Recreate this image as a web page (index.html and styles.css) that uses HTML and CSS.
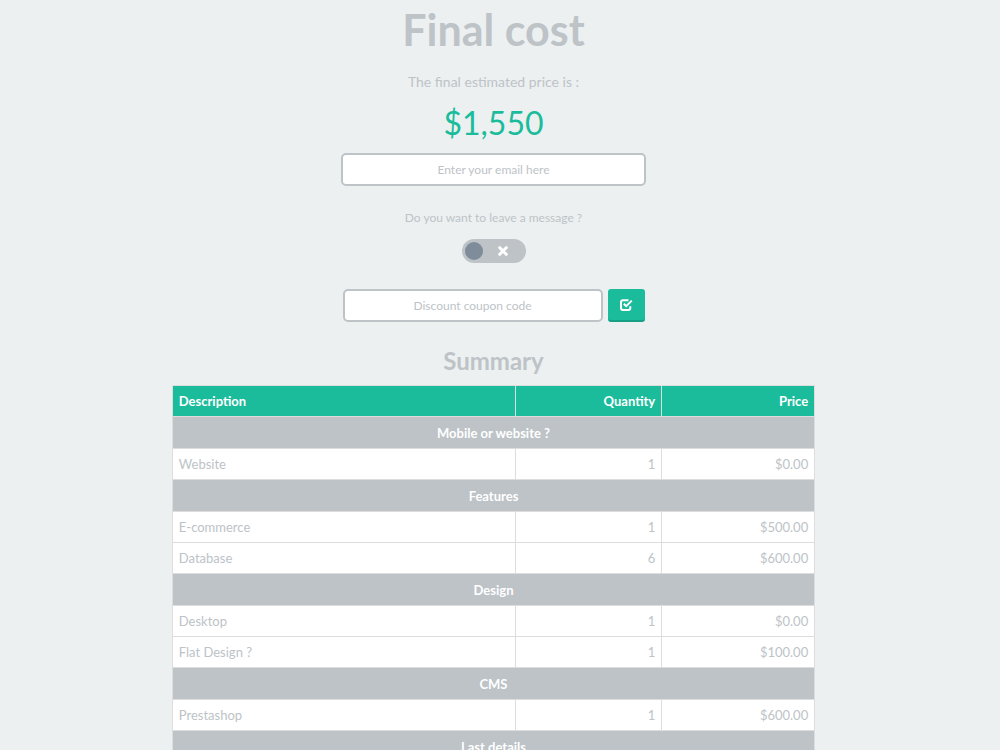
FILE: index.html
```html
<!DOCTYPE html>
<html lang="en">

<head>
  <meta charset="UTF-8" />
  <meta name="viewport" content="width=device-width, initial-scale=1.0" />
  <title>Final cost</title>
  <link rel="stylesheet" href="styles.css">
</head>

<body>

  <main class="estimate">
    <h1>Final cost</h1>
    <p class="lead">The final estimated price is :</p>
    <p class="total">$1,550</p>

    <form class="estimate-form">
      <input class="field email" type="email" placeholder="Enter your email here" aria-label="Email" />

      <label class="question" for="message">Do you want to leave a message ?</label>
      <div class="switch">
        <input id="message" type="checkbox" />
        <svg class="cross" viewBox="0 0 12 12" aria-hidden="true">
          <path d="M1.8 1.8 L10.2 10.2 M10.2 1.8 L1.8 10.2" />
        </svg>
      </div>

      <!-- Coupon and check button in same row -->
      <div class="coupon-row">
        <input class="field coupon" type="text" placeholder="Discount coupon code" aria-label="Discount coupon code" />
        <button class="check-btn" type="button" aria-label="Check coupon">
          <svg viewBox="0 0 14 14" aria-hidden="true">
            <path d="M9.5 2.2 H4 Q2 2.2 2 4.2 V10 Q2 12 4 12 H9.3 Q11.3 12 11.3 10 V8.2" />
            <path d="M4.8 5.8 L7.2 8.2 L12.8 2.6" />
          </svg>
        </button>
      </div>
    </form>

    <h2>Summary</h2>
    <table class="summary">
      <thead>
        <tr>
          <th class="description">Description</th>
          <th class="quantity">Quantity</th>
          <th class="price">Price</th>
        </tr>
      </thead>
      <tbody>
        <tr class="category"><th colspan="3">Mobile or website ?</th></tr>
        <tr><td>Website</td><td>1</td><td>$0.00</td></tr>
        <tr class="category"><th colspan="3">Features</th></tr>
        <tr><td>E-commerce</td><td>1</td><td>$500.00</td></tr>
        <tr><td>Database</td><td>6</td><td>$600.00</td></tr>
        <tr class="category"><th colspan="3">Design</th></tr>
        <tr><td>Desktop</td><td>1</td><td>$0.00</td></tr>
        <tr><td>Flat Design ?</td><td>1</td><td>$100.00</td></tr>
        <tr class="category"><th colspan="3">CMS</th></tr>
        <tr><td>Prestashop</td><td>1</td><td>$600.00</td></tr>
        <tr class="category"><th colspan="3">Last details</th></tr>
      </tbody>
    </table>
  </main>

</body>

</html>
```

FILE: styles.css
```css
:root {
  --green: #1abc9c;
  --dark-green: #16a085;
  --silver: #bdc3c7;
  --slate: #7f8c9a;
  --clouds: #ecf0f1;
  --line: #dddddd;
}

* {
  margin: 0;
  padding: 0;
  box-sizing: border-box;
  font-family: Lato, sans-serif;
}

body {
  background-color: var(--clouds);
  color: var(--silver);
  padding-right: 13px;
}

.estimate {
  width: calc(66% - 8px);
  margin: 0 auto;
  text-align: center;
}

h1 {
  font-size: 43px;
  line-height: 60px;
}

.lead {
  margin-top: 12px;
  font-size: 14px;
  line-height: 20px;
}

.total {
  margin-top: 11px;
  color: var(--green);
  font-size: 32px;
  line-height: 40px;
}

.estimate-form {
  display: flex;
  flex-direction: column;
  align-items: center;
  margin-top: 10px;
}

.field {
  height: 33px;
  padding: 0 10px;
  border: 2px solid var(--silver);
  border-radius: 5px;
  background-color: white;
  color: var(--silver);
  font-size: 12px;
  text-align: center;
  outline: none;
}

.field::placeholder {
  color: var(--silver);
  opacity: 1;
}

.field:focus {
  border-color: var(--green);
}

.email {
  width: 305px;
  max-width: 100%;
}

.question {
  margin-top: 22px;
  font-size: 12px;
  line-height: 20px;
}

/* Yes / no switch */
.switch {
  display: grid;
  align-items: center;
  margin-top: 11px;
}

.switch input,
.switch .cross {
  grid-area: 1 / 1;
}

.switch input {
  appearance: none;
  display: flex;
  align-items: center;
  width: 64px;
  height: 24px;
  padding: 0 3px;
  border-radius: 12px;
  background-color: var(--silver);
  cursor: pointer;
}

.switch input::before {
  content: "";
  width: 18px;
  height: 18px;
  border-radius: 50%;
  background-color: var(--slate);
}

.switch input:checked {
  justify-content: flex-end;
  background-color: var(--green);
}

.cross {
  width: 12px;
  height: 12px;
  margin-left: 35px;
  fill: none;
  stroke: white;
  stroke-width: 3;
  pointer-events: none;
}

.switch input:checked + .cross {
  visibility: hidden;
}

.coupon-row {
  display: flex;
  gap: 5px;
  margin-top: 26px;
}

.coupon {
  width: 260px;
}

.check-btn {
  display: flex;
  align-items: center;
  justify-content: center;
  width: 37px;
  height: 33px;
  border: none;
  border-bottom: 2px solid var(--dark-green);
  border-radius: 3px;
  background-color: var(--green);
  cursor: pointer;
}

.check-btn svg {
  width: 14px;
  height: 14px;
  fill: none;
  stroke: white;
  stroke-width: 2;
}

h2 {
  margin-top: 23px;
  font-size: 24px;
  line-height: 32px;
}

.summary {
  width: 100%;
  margin-top: 8px;
  border-collapse: collapse;
  table-layout: fixed;
  background-color: white;
  font-size: 13px;
  line-height: 20px;
}

.summary th,
.summary td {
  height: 31px;
  padding: 0 6px;
  border: 1px solid var(--line);
  text-align: right;
}

.summary th:first-child,
.summary td:first-child {
  text-align: left;
}

.summary thead th {
  background-color: var(--green);
  color: white;
}

.summary .category th {
  height: 32px;
  background-color: var(--silver);
  color: white;
  text-align: center;
}

.quantity {
  width: 146px;
}

.price {
  width: 153px;
}
```
